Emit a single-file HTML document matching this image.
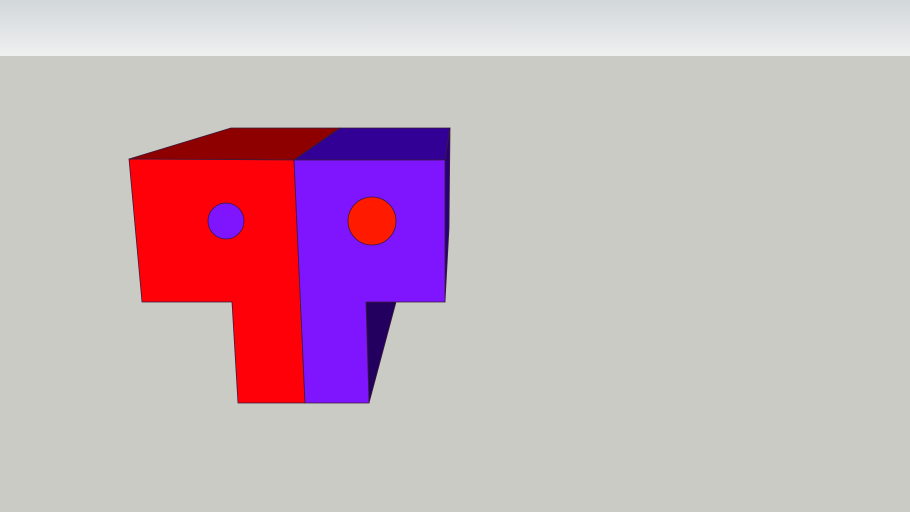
<!DOCTYPE html>
<html><head><style>html,body{margin:0;padding:0;width:910px;height:512px;overflow:hidden}</style></head>
<body>
<svg width="910" height="512" viewBox="0 0 910 512" xmlns="http://www.w3.org/2000/svg">
<defs><linearGradient id="sky" x1="0" y1="0" x2="0" y2="1"><stop offset="0" stop-color="#d2d7da"/><stop offset="1" stop-color="#eff0f0"/></linearGradient></defs>
<rect width="910" height="56" fill="url(#sky)"/>
<rect y="56" width="910" height="456" fill="#cbcbc6"/>
<g stroke="#3a1a3a" stroke-width="0.8" stroke-linejoin="round">
<polygon points="129,159 231,128 340,128 294,160" fill="#8e0000"/>
<polygon points="294,160 340,128 450,128 445,160" fill="#320094"/>
<polygon points="445,160 450,128 449,228 445,302" fill="#27007a"/>
<polygon points="366,302 396,302 369,403" fill="#230060"/>
<polygon points="129,159 294,160 305,403 238,403 232,302 142,302" fill="#ff0009"/>
<polygon points="294,160 445,160 445,302 366,302 369,403 305,403" fill="#7f14ff"/>
<circle cx="226" cy="221" r="18" fill="#7f14ff"/>
<circle cx="372" cy="221" r="24" fill="#ff1a00"/>
</g>
</svg>
</body></html>
